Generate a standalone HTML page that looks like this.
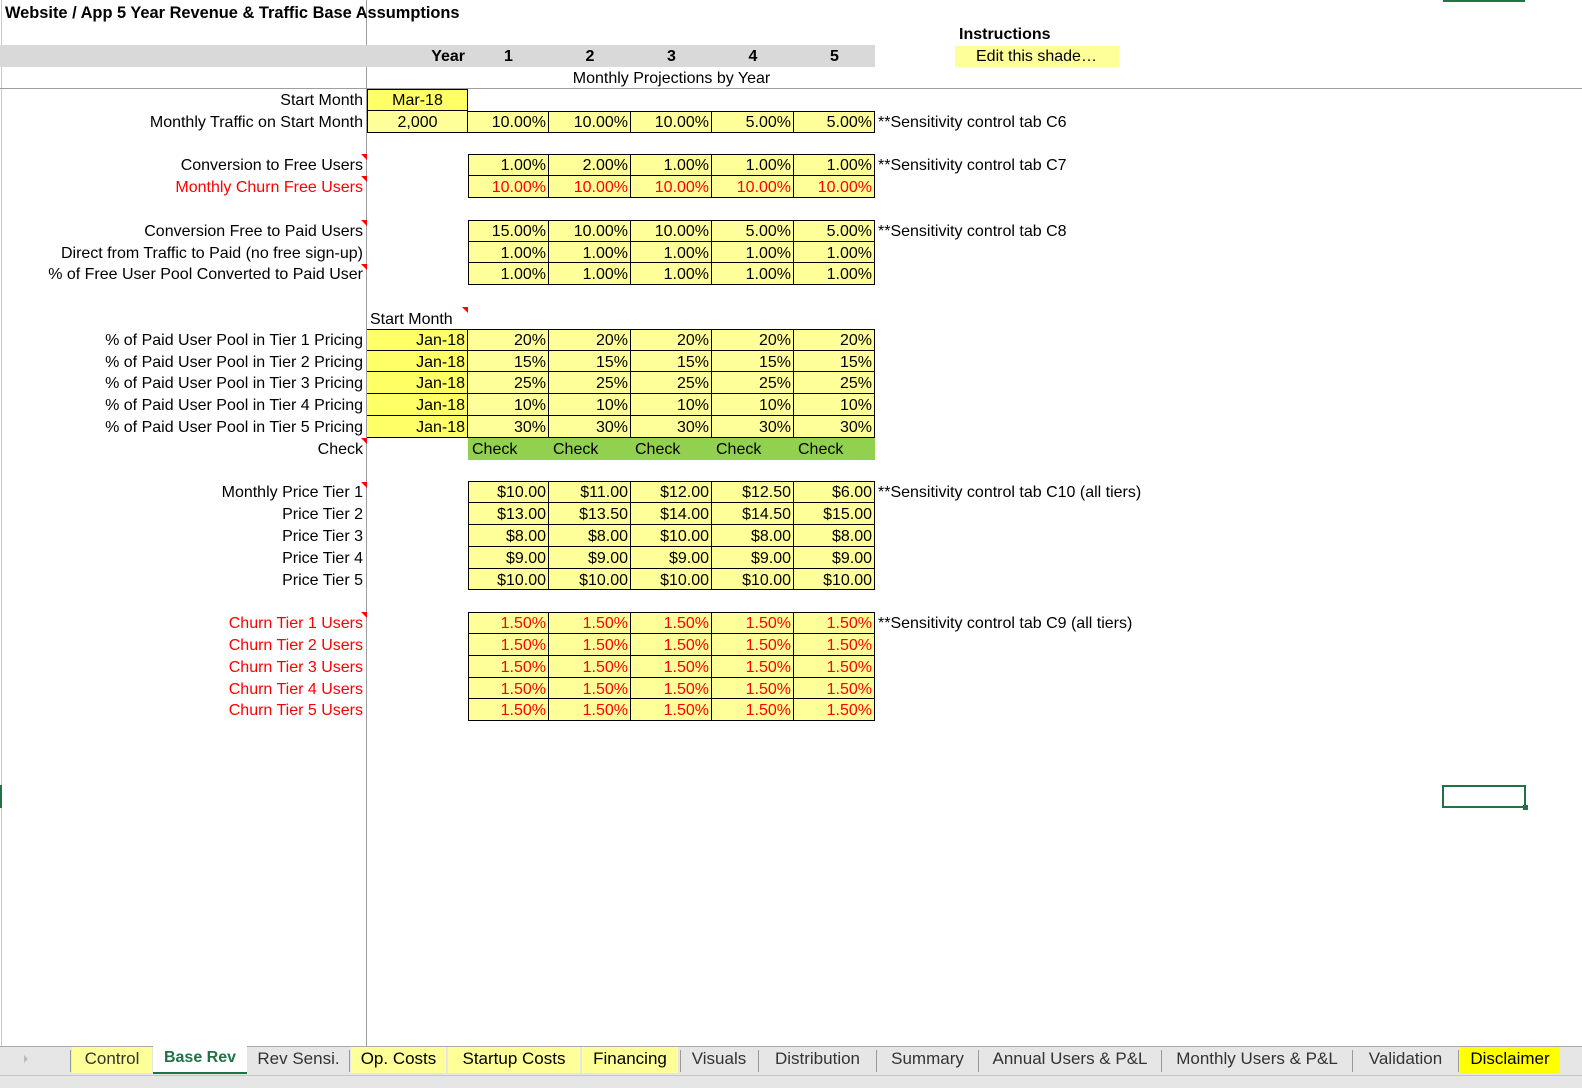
<!DOCTYPE html>
<html><head><meta charset="utf-8"><style>
*{margin:0;padding:0;box-sizing:border-box}
body{width:1582px;height:1088px;background:#fff;position:relative;overflow:hidden;font-family:"Liberation Sans",Arial,sans-serif;font-size:16px;color:#000}
.abs{position:absolute}
.rows{position:absolute;left:0;top:89px;width:1582px}
.r{height:21.8px;display:flex;position:relative;line-height:23px;white-space:nowrap}
.r>div{height:21.8px;flex:none;overflow:visible}
.a{width:367px;text-align:right;padding-right:4px}
.b{width:101px}.c{width:81px}.d{width:82px}
.n{text-align:right;padding-right:3px}
.ce{text-align:center}
.y{background:#ffff99}.Y{background:#ffff66}
.g{background:#92d050;padding-left:4px}
.k{box-shadow:inset -1px -1px 0 #000}
.kt{box-shadow:inset -1px -1px 0 #000,inset 0 1px 0 #000}
.kl{box-shadow:inset -1px -1px 0 #000,inset 1px 0 0 #000}
.ktl{box-shadow:inset -1px -1px 0 #000,inset 1px 1px 0 #000}
.red{color:#ff0000}
.note{padding-left:3px}
.tri{position:absolute;width:0;height:0;border-top:6px solid #f00;border-left:6px solid transparent}
.tab{position:absolute;top:1047px;height:26px;line-height:24px;text-align:center;font-size:17px;color:#333;transform-origin:left}
.sep{position:absolute;top:1050px;width:1px;height:22px;background:#999}
</style></head><body>
<div class="abs" style="left:366px;top:0;width:1px;height:1046px;background:#9e9e9e"></div>
<div class="abs" style="left:1px;top:0;width:1px;height:1046px;background:#c8c8c8"></div>
<div class="abs" style="left:0;top:88px;width:1582px;height:1px;background:#9e9e9e"></div>
<div class="abs" style="left:0;top:45px;width:875px;height:22px;background:#d9d9d9"></div>
<div class="abs" style="left:1443px;top:0;width:82px;height:2px;background:#217346"></div>
<div class="abs" style="left:0;top:785px;width:2px;height:23px;background:#217346"></div>
<div class="abs" style="left:1442px;top:785px;width:84px;height:23px;border:2px solid #217346"></div>
<div class="abs" style="left:1523px;top:805px;width:5px;height:5px;background:#217346"></div>

<div class="abs" style="left:5px;top:4px;font-weight:bold;font-size:16.4px">Website / App 5 Year Revenue &amp; Traffic Base Assumptions</div>
<div class="abs" style="left:959px;top:26px;font-weight:bold">Instructions</div>
<div class="abs" style="left:955px;top:46px;width:164px;height:21px;background:#ffff99;line-height:22px;padding-left:21px">Edit this shade…</div>
<div class="abs" style="left:367px;top:45px;width:101px;height:22px;line-height:24px;text-align:right;padding-right:3px;font-weight:bold">Year</div>
<div class="abs" style="left:468px;top:45px;width:81px;height:22px;line-height:24px;text-align:center;font-weight:bold">1</div>
<div class="abs" style="left:549px;top:45px;width:82px;height:22px;line-height:24px;text-align:center;font-weight:bold">2</div>
<div class="abs" style="left:631px;top:45px;width:81px;height:22px;line-height:24px;text-align:center;font-weight:bold">3</div>
<div class="abs" style="left:712px;top:45px;width:82px;height:22px;line-height:24px;text-align:center;font-weight:bold">4</div>
<div class="abs" style="left:794px;top:45px;width:81px;height:22px;line-height:24px;text-align:center;font-weight:bold">5</div>
<div class="abs" style="left:468px;top:67px;width:407px;height:22px;line-height:23px;text-align:center">Monthly Projections by Year</div>

<div class="rows">
<div class="r"><div class="a">Start Month</div><div class="b Y ce ktl">Mar-18</div></div>
<div class="r"><div class="a">Monthly Traffic on Start Month</div><div class="b y ce kl">2,000</div><div class="c y n kt">10.00%</div><div class="d y n kt">10.00%</div><div class="c y n kt">10.00%</div><div class="d y n kt">5.00%</div><div class="c y n kt">5.00%</div><div class="note">**Sensitivity control tab C6</div></div>
<div class="r"></div>
<div class="r"><div class="a">Conversion to Free Users</div><div class="b"></div><div class="c y n ktl">1.00%</div><div class="d y n kt">2.00%</div><div class="c y n kt">1.00%</div><div class="d y n kt">1.00%</div><div class="c y n kt">1.00%</div><div class="note">**Sensitivity control tab C7</div></div>
<div class="r"><div class="a red">Monthly Churn Free Users</div><div class="b"></div><div class="c y n kl red">10.00%</div><div class="d y n k red">10.00%</div><div class="c y n k red">10.00%</div><div class="d y n k red">10.00%</div><div class="c y n k red">10.00%</div></div>
<div class="r"></div>
<div class="r"><div class="a">Conversion Free to Paid Users</div><div class="b"></div><div class="c y n ktl">15.00%</div><div class="d y n kt">10.00%</div><div class="c y n kt">10.00%</div><div class="d y n kt">5.00%</div><div class="c y n kt">5.00%</div><div class="note">**Sensitivity control tab C8</div></div>
<div class="r"><div class="a">Direct from Traffic to Paid (no free sign-up)</div><div class="b"></div><div class="c y n kl">1.00%</div><div class="d y n k">1.00%</div><div class="c y n k">1.00%</div><div class="d y n k">1.00%</div><div class="c y n k">1.00%</div></div>
<div class="r"><div class="a">% of Free User Pool Converted to Paid User</div><div class="b"></div><div class="c y n kl">1.00%</div><div class="d y n k">1.00%</div><div class="c y n k">1.00%</div><div class="d y n k">1.00%</div><div class="c y n k">1.00%</div></div>
<div class="r"></div>
<div class="r"><div class="a"></div><div class="b" style="padding-left:3px;line-height:25px">Start Month</div></div>
<div class="r"><div class="a">% of Paid User Pool in Tier 1 Pricing</div><div class="b Y n kt">Jan-18</div><div class="c y n kt">20%</div><div class="d y n kt">20%</div><div class="c y n kt">20%</div><div class="d y n kt">20%</div><div class="c y n kt">20%</div></div>
<div class="r"><div class="a">% of Paid User Pool in Tier 2 Pricing</div><div class="b Y n k">Jan-18</div><div class="c y n k">15%</div><div class="d y n k">15%</div><div class="c y n k">15%</div><div class="d y n k">15%</div><div class="c y n k">15%</div></div>
<div class="r"><div class="a">% of Paid User Pool in Tier 3 Pricing</div><div class="b Y n k">Jan-18</div><div class="c y n k">25%</div><div class="d y n k">25%</div><div class="c y n k">25%</div><div class="d y n k">25%</div><div class="c y n k">25%</div></div>
<div class="r"><div class="a">% of Paid User Pool in Tier 4 Pricing</div><div class="b Y n k">Jan-18</div><div class="c y n k">10%</div><div class="d y n k">10%</div><div class="c y n k">10%</div><div class="d y n k">10%</div><div class="c y n k">10%</div></div>
<div class="r"><div class="a">% of Paid User Pool in Tier 5 Pricing</div><div class="b Y n k">Jan-18</div><div class="c y n k">30%</div><div class="d y n k">30%</div><div class="c y n k">30%</div><div class="d y n k">30%</div><div class="c y n k">30%</div></div>
<div class="r"><div class="a">Check</div><div class="b"></div><div class="c g">Check</div><div class="d g">Check</div><div class="c g">Check</div><div class="d g">Check</div><div class="c g">Check</div></div>
<div class="r"></div>
<div class="r"><div class="a">Monthly Price Tier 1</div><div class="b"></div><div class="c y n ktl">$10.00</div><div class="d y n kt">$11.00</div><div class="c y n kt">$12.00</div><div class="d y n kt">$12.50</div><div class="c y n kt">$6.00</div><div class="note">**Sensitivity control tab C10 (all tiers)</div></div>
<div class="r"><div class="a">Price Tier 2</div><div class="b"></div><div class="c y n kl">$13.00</div><div class="d y n k">$13.50</div><div class="c y n k">$14.00</div><div class="d y n k">$14.50</div><div class="c y n k">$15.00</div></div>
<div class="r"><div class="a">Price Tier 3</div><div class="b"></div><div class="c y n kl">$8.00</div><div class="d y n k">$8.00</div><div class="c y n k">$10.00</div><div class="d y n k">$8.00</div><div class="c y n k">$8.00</div></div>
<div class="r"><div class="a">Price Tier 4</div><div class="b"></div><div class="c y n kl">$9.00</div><div class="d y n k">$9.00</div><div class="c y n k">$9.00</div><div class="d y n k">$9.00</div><div class="c y n k">$9.00</div></div>
<div class="r"><div class="a">Price Tier 5</div><div class="b"></div><div class="c y n kl">$10.00</div><div class="d y n k">$10.00</div><div class="c y n k">$10.00</div><div class="d y n k">$10.00</div><div class="c y n k">$10.00</div></div>
<div class="r"></div>
<div class="r"><div class="a red">Churn Tier 1 Users</div><div class="b"></div><div class="c y n ktl red">1.50%</div><div class="d y n kt red">1.50%</div><div class="c y n kt red">1.50%</div><div class="d y n kt red">1.50%</div><div class="c y n kt red">1.50%</div><div class="note">**Sensitivity control tab C9 (all tiers)</div></div>
<div class="r"><div class="a red">Churn Tier 2 Users</div><div class="b"></div><div class="c y n kl red">1.50%</div><div class="d y n k red">1.50%</div><div class="c y n k red">1.50%</div><div class="d y n k red">1.50%</div><div class="c y n k red">1.50%</div></div>
<div class="r"><div class="a red">Churn Tier 3 Users</div><div class="b"></div><div class="c y n kl red">1.50%</div><div class="d y n k red">1.50%</div><div class="c y n k red">1.50%</div><div class="d y n k red">1.50%</div><div class="c y n k red">1.50%</div></div>
<div class="r"><div class="a red">Churn Tier 4 Users</div><div class="b"></div><div class="c y n kl red">1.50%</div><div class="d y n k red">1.50%</div><div class="c y n k red">1.50%</div><div class="d y n k red">1.50%</div><div class="c y n k red">1.50%</div></div>
<div class="r"><div class="a red">Churn Tier 5 Users</div><div class="b"></div><div class="c y n kl red">1.50%</div><div class="d y n k red">1.50%</div><div class="c y n k red">1.50%</div><div class="d y n k red">1.50%</div><div class="c y n k red">1.50%</div></div>
</div>

<div class="tri" style="left:361px;top:154px"></div>
<div class="tri" style="left:361px;top:176px"></div>
<div class="tri" style="left:361px;top:220px"></div>
<div class="tri" style="left:361px;top:264px"></div>
<div class="tri" style="left:462px;top:307px"></div>
<div class="tri" style="left:361px;top:438px"></div>
<div class="tri" style="left:361px;top:482px"></div>
<div class="tri" style="left:361px;top:612px"></div>

<div class="abs" style="left:0;top:1046px;width:1582px;height:42px;background:#e6e6e6;border-top:1px solid #aaa"></div>
<div class="abs" style="left:0;top:1075px;width:1582px;height:1px;background:#c6c6c6"></div>
<div class="abs" style="left:24px;top:1055px;width:0;height:0;border-left:4px solid #bbb;border-top:4px solid transparent;border-bottom:4px solid transparent"></div>
<div class="sep" style="left:70px"></div>
<div class="tab" style="left:72px;width:80px;background:#ffff99">Control</div>
<div class="tab" style="left:153px;width:94px;background:#fff;color:#217346;font-weight:bold;border-bottom:2px solid #217346;top:1046px;height:28px;line-height:24px;font-size:16px">Base Rev</div>
<div class="tab" style="left:250px;width:97px">Rev Sensi.</div>
<div class="sep" style="left:349px"></div>
<div class="tab" style="left:351px;width:95px;background:#ffff99;color:#000">Op. Costs</div>
<div class="tab" style="left:448px;width:132px;background:#ffff99;color:#000">Startup Costs</div>
<div class="tab" style="left:582px;width:96px;background:#ffff99;color:#000">Financing</div>
<div class="sep" style="left:680px"></div>
<div class="tab" style="left:681px;width:76px">Visuals</div>
<div class="sep" style="left:758px"></div>
<div class="tab" style="left:760px;width:115px">Distribution</div>
<div class="sep" style="left:876px"></div>
<div class="tab" style="left:878px;width:99px">Summary</div>
<div class="sep" style="left:978px"></div>
<div class="tab" style="left:980px;width:180px">Annual Users &amp; P&amp;L</div>
<div class="sep" style="left:1161px"></div>
<div class="tab" style="left:1163px;width:188px">Monthly Users &amp; P&amp;L</div>
<div class="sep" style="left:1352px"></div>
<div class="tab" style="left:1355px;width:101px">Validation</div>
<div class="sep" style="left:1458px"></div>
<div class="tab" style="left:1460px;width:100px;background:#ffff00;color:#000">Disclaimer</div>
</body></html>
